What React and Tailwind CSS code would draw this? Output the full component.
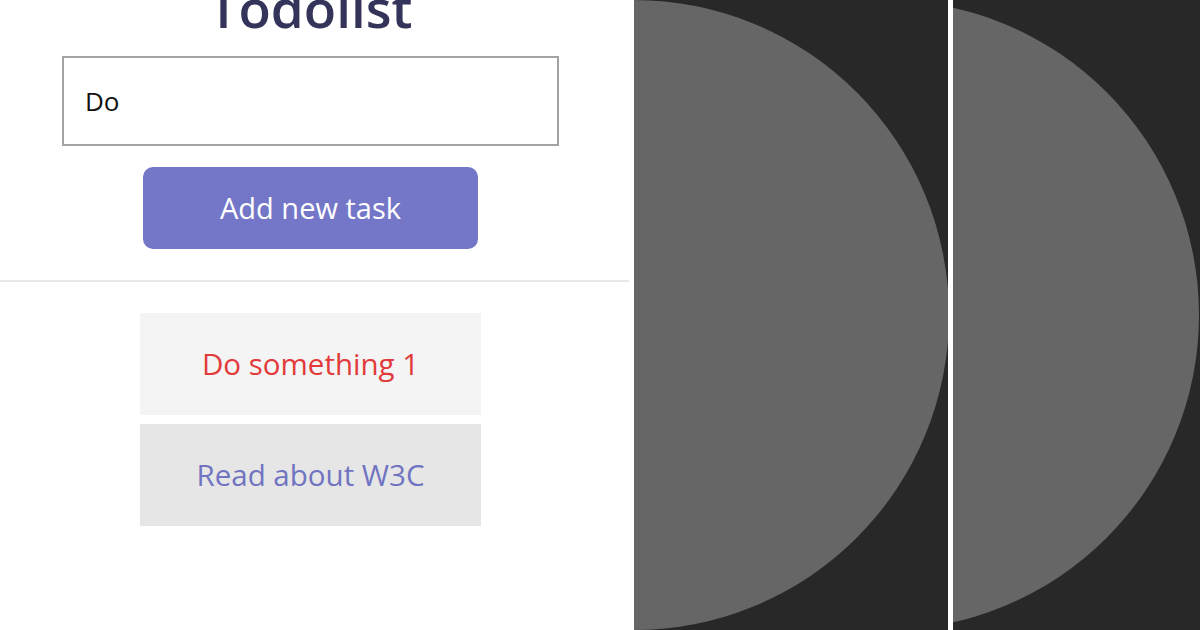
import { useState } from "react";

const tasks = [
    { id: 1, text: "Do something 1", done: false },
    { id: 2, text: "Read about W3C", done: true },
];

const Todo = () => {
    const [value, setValue] = useState("Do");

    return (
        <div className="w-[634px] shrink-0 flex flex-col bg-white font-['Open_Sans',sans-serif]">
            <div className="w-[621px] flex flex-col items-center">
                <h1 className="mt-[-19px] h-[53px] text-[53px] leading-none font-semibold text-[#34345a]">Todolist</h1>
                <input
                    value={value}
                    onChange={(e) => setValue(e.target.value)}
                    className="mt-[22px] w-[497px] h-[90px] border-2 border-[#a3a3a3] pl-[21px] text-[26px] text-[#111] outline-none"
                />
                <button className="mt-[21px] w-[335px] h-[82px] rounded-[10px] bg-[#7476c7] text-[29px] text-white">
                    Add new task
                </button>
            </div>
            <div className="mt-[31px] w-[629px] h-[2px] bg-[#e8e8e8]" />
            <div className="w-[621px] flex flex-col items-center gap-[9px] mt-[31px]">
                {tasks.map((t) => (
                    <div
                        key={t.id}
                        className={
                            t.done
                                ? "w-[341px] h-[102px] flex items-center justify-center bg-[#e6e6e6] text-[29.5px] text-[#7174c1]"
                                : "w-[341px] h-[102px] flex items-center justify-center bg-[#f4f4f4] text-[29.5px] text-[#e23a3a]"
                        }
                    >
                        {t.text}
                    </div>
                ))}
            </div>
        </div>
    );
};

export default function App() {
    return (
        <div className="flex w-[1200px] h-[630px] overflow-hidden bg-white">
            <Todo />
            <div className="relative w-[314px] shrink-0 bg-[#282828] overflow-hidden">
                <div className="absolute left-[-315px] top-0 w-[630px] h-[630px] rounded-full bg-[#666666]" />
            </div>
            <div className="w-[5px] shrink-0 bg-white" />
            <div className="relative flex-1 bg-[#282828] overflow-hidden">
                <div className="absolute left-[-384px] top-0 w-[630px] h-[630px] rounded-full bg-[#666666]" />
            </div>
        </div>
    );
}
